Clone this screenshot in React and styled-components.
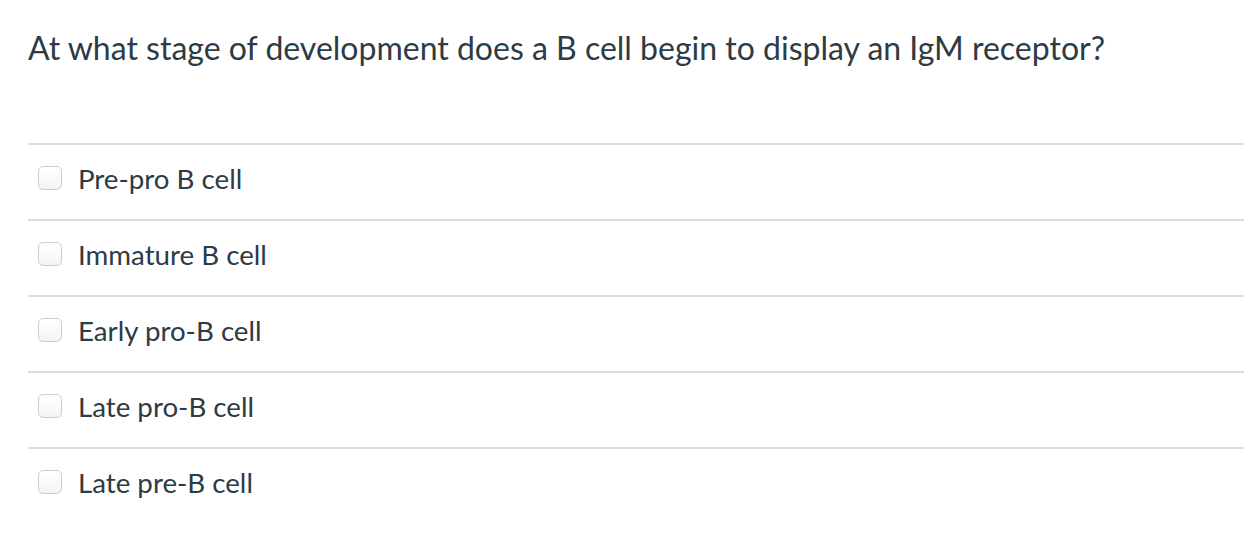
import React from 'react';
import styled, { createGlobalStyle } from 'styled-components';

const GlobalStyle = createGlobalStyle`
  body {
    margin: 0;
    background: #fff;
    font-family: Lato, "Open Sans", sans-serif;
    color: #2d3b45;
  }
`;

const answers = [
  'Pre-pro B cell',
  'Immature B cell',
  'Early pro-B cell',
  'Late pro-B cell',
  'Late pre-B cell',
];

const Question = styled.div`
  padding: 24px 0 0 28px;
`;

const Prompt = styled.h2`
  margin: 0;
  font-size: 32px;
  font-weight: 400;
  line-height: 48px;
  height: 119px;
`;

const AnswerList = styled.div`
  display: flex;
  flex-direction: column;
`;

const Answer = styled.label`
  display: flex;
  align-items: center;
  gap: 16px;
  height: 66px;
  padding: 0 0 8px 10px;
  border-top: 2px solid #dcdcdc;
  font-size: 27.7px;
`;

const Box = styled.span`
  width: 22px;
  height: 22px;
  border: 1px solid #cccccc;
  border-radius: 5px;
  background: linear-gradient(#ffffff, #f4f4f4);
  flex-shrink: 0;
`;

export default function App() {
  return (
    <>
      <GlobalStyle />
      <Question>
        <Prompt>At what stage of development does a B cell begin to display an IgM receptor?</Prompt>
        <AnswerList>
          {answers.map((a) => (
            <Answer key={a}>
              <Box />
              {a}
            </Answer>
          ))}
        </AnswerList>
      </Question>
    </>
  );
}
